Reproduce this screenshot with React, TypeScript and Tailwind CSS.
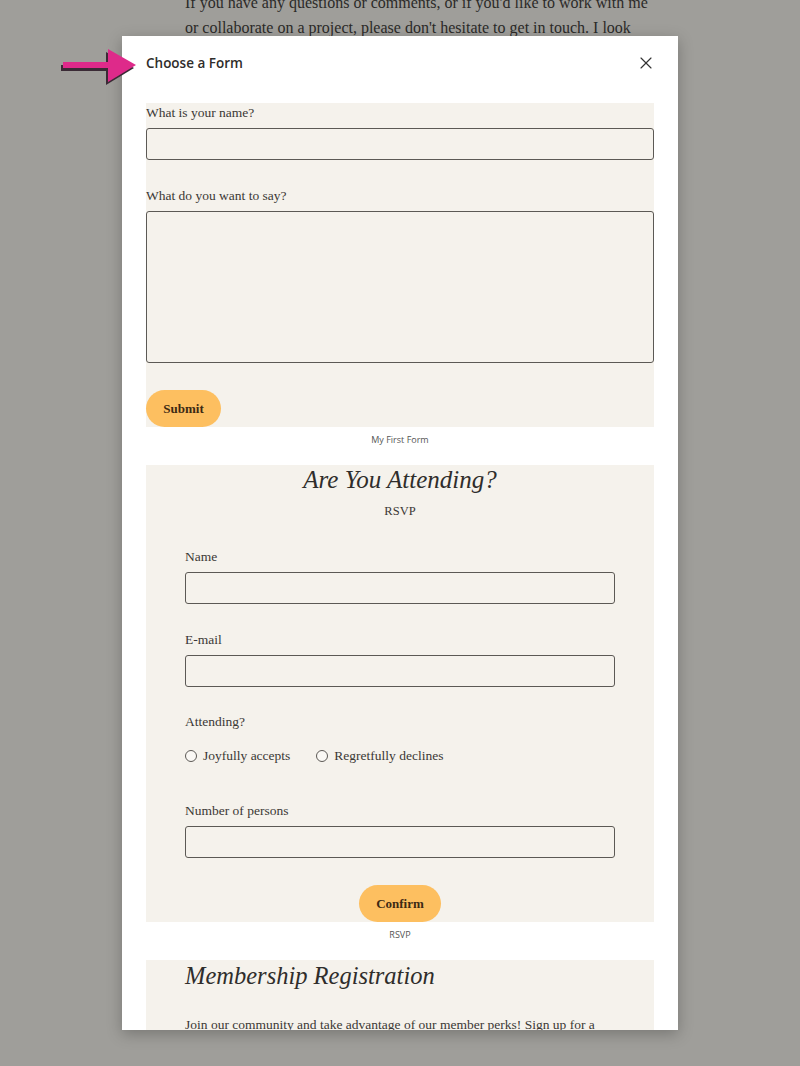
import { X } from 'lucide-react';

const serif = { fontFamily: '"Liberation Serif", "Times New Roman", serif' };
const sans = { fontFamily: '"Open Sans", "Noto Sans", sans-serif' };

function Field({ label, tall }: { label: string; tall?: boolean }) {
  return (
    <div className="flex flex-col">
      <label className="text-[13.5px] leading-5 text-[#3b3835]">{label}</label>
      <div
        className={`mt-[5px] rounded-[3px] border border-[#5c5955] ${tall ? 'h-[152px]' : 'h-[32px]'}`}
      />
    </div>
  );
}

function Radio({ label }: { label: string }) {
  return (
    <div className="flex items-center gap-[6px]">
      <span className="h-[12px] w-[12px] rounded-full border border-[#5c5955] bg-[#faf8f4]" />
      <span className="text-[13.5px] leading-5 text-[#3b3835]">{label}</span>
    </div>
  );
}

function Arrow() {
  return (
    <svg className="absolute left-[55px] top-[40px]" width="83" height="50" viewBox="0 0 83 50">
      <g fill="#3a2a35" transform="translate(-2 3)">
        <rect x="8" y="22" width="48" height="6" />
        <polygon points="53,9 81,25 53,42" />
      </g>
      <g fill="#de2a8a">
        <rect x="8" y="22" width="48" height="6" />
        <polygon points="53,9 81,25 53,42" />
      </g>
    </svg>
  );
}

export default function App() {
  return (
    <div className="relative h-[1066px] w-[800px] overflow-hidden bg-[#9f9e9a]" style={serif}>
      <p className="ml-[185px] -mt-[10px] w-[472px] text-[16px] leading-[25px] text-[#2b2a28]">
        If you have any questions or comments, or if you'd like to work with me or collaborate on a
        project, please don't hesitate to get in touch. I look forward to hearing from you.
      </p>

      <div className="absolute left-[122px] top-[36px] flex h-[994px] w-[556px] flex-col overflow-hidden bg-white shadow-[0_4px_14px_rgba(0,0,0,0.25)]">
        <div className="flex h-[54px] shrink-0 items-center justify-between pl-6 pr-[22px]">
          <h2 className="text-[13.5px] font-semibold text-[#2f2d2b]" style={sans}>
            Choose a Form
          </h2>
          <X size={20} strokeWidth={1.4} className="text-[#333]" />
        </div>

        <div className="flex flex-col px-6 pt-[13px]">
          <div className="flex flex-col bg-[#f5f2ec]">
            <Field label="What is your name?" />
            <div className="mt-[26px]">
              <Field label="What do you want to say?" tall />
            </div>
            <button className="mt-[27px] h-[37px] w-[75px] rounded-full bg-[#fdbf60] text-[13px] font-semibold text-[#3d2a14]">
              Submit
            </button>
          </div>
          <p className="mt-[7px] text-center text-[9px] leading-3 text-[#555]" style={sans}>
            My First Form
          </p>

          <div className="mt-[19px] flex flex-col bg-[#f5f2ec] px-[39px]">
            <h3 className="text-center text-[25px] italic leading-[30px] text-[#2f2d2b]">
              Are You Attending?
            </h3>
            <p className="mt-[6px] text-center text-[12.5px] leading-5 text-[#3b3835]">RSVP</p>
            <div className="mt-[26px]">
              <Field label="Name" />
            </div>
            <div className="mt-[26px]">
              <Field label="E-mail" />
            </div>
            <label className="mt-[25px] text-[13.5px] leading-5 text-[#3b3835]">Attending?</label>
            <div className="mt-[14px] flex gap-[26px]">
              <Radio label="Joyfully accepts" />
              <Radio label="Regretfully declines" />
            </div>
            <div className="mt-[35px]">
              <Field label="Number of persons" />
            </div>
            <button className="mx-auto mt-[27px] h-[37px] w-[82px] rounded-full bg-[#fdbf60] text-[13px] font-semibold text-[#3d2a14]">
              Confirm
            </button>
          </div>
          <p className="mt-[7px] text-center text-[9px] leading-3 text-[#555]" style={sans}>
            RSVP
          </p>

          <div className="mt-[19px] flex flex-col bg-[#f5f2ec] px-[39px]">
            <h3 className="text-[24.5px] italic leading-[32px] text-[#2f2d2b]">
              Membership Registration
            </h3>
            <p className="mt-[23px] text-[13.5px] leading-5 text-[#3b3835]">
              Join our community and take advantage of our member perks! Sign up for a membership
              today and enjoy exclusive benefits.
            </p>
          </div>
        </div>
      </div>

      <Arrow />
    </div>
  );
}
